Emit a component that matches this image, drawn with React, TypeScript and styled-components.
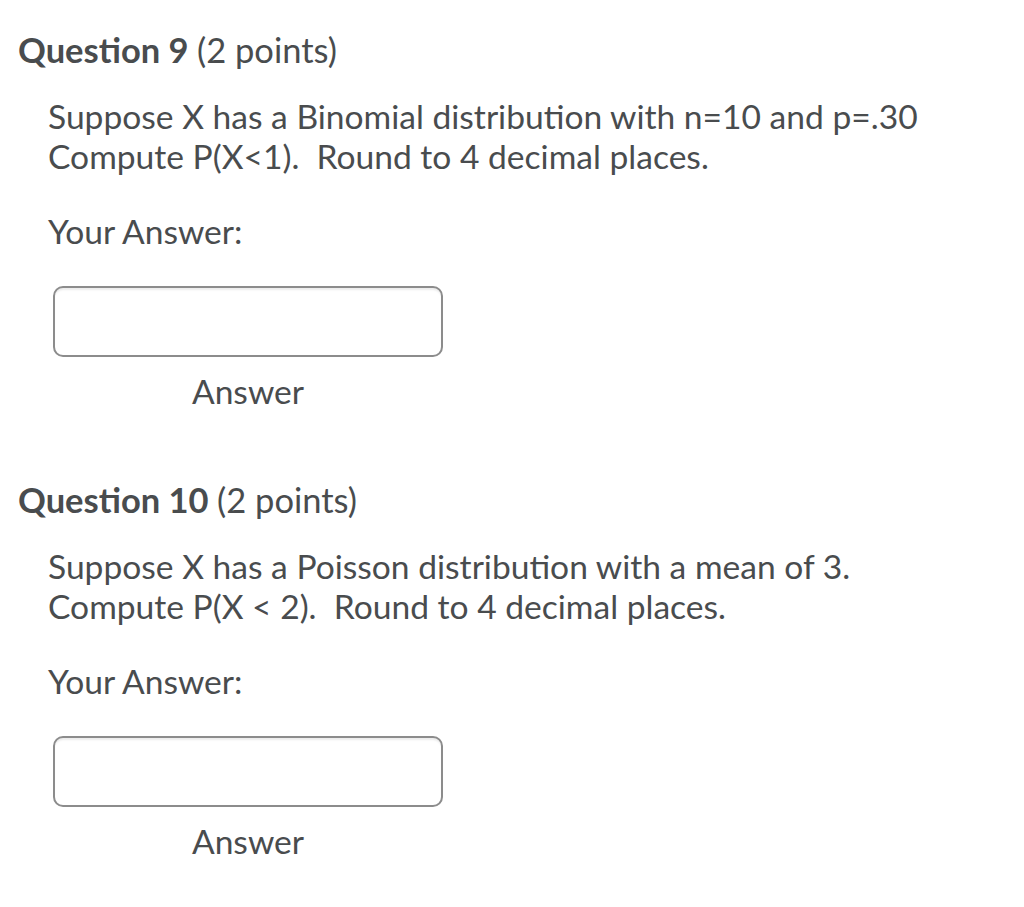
import * as React from 'react';
import styled, { createGlobalStyle } from 'styled-components';

const GlobalStyle = createGlobalStyle`
  html, body {
    margin: 0;
    padding: 0;
    background: #ffffff;
  }
  body {
    font-family: Lato, "Open Sans", sans-serif;
    color: #494c4e;
  }
`;

const Page = styled.main`
  padding: 30px 0 0 18px;
  display: flex;
  flex-direction: column;
`;

const QuestionBlock = styled.section`
  height: 450px;
  display: flex;
  flex-direction: column;
`;

const Heading = styled.h2`
  margin: 0;
  font-size: 34.5px;
  line-height: 40px;
  font-weight: 700;
  color: #494c4e;
`;

const Points = styled.span`
  font-weight: 400;
`;

const Body = styled.div`
  padding-left: 30px;
  display: flex;
  flex-direction: column;
  font-size: 33.6px;
  line-height: 40px;
`;

const Prompt = styled.p`
  margin: 26px 0 0;
  white-space: pre-wrap;
`;

const Label = styled.div`
  margin-top: 35px;
`;

const AnswerField = styled.div`
  margin-top: 35px;
  margin-left: 5px;
  width: 390px;
  display: flex;
  flex-direction: column;
  align-items: center;
`;

const Input = styled.input`
  box-sizing: border-box;
  width: 390px;
  height: 71px;
  border: 2px solid #8c8c8c;
  border-radius: 10px;
  box-shadow: inset 0 3px 2px -1px #ececec;
  background: #fff;
  outline: none;
`;

const Caption = styled.div`
  margin-top: 14px;
`;

type Question = {
  number: number;
  lines: string[];
};

const questions: Question[] = [
  {
    number: 9,
    lines: [
      'Suppose X has a Binomial distribution with n=10 and p=.30',
      'Compute P(X<1).  Round to 4 decimal places.'
    ]
  },
  {
    number: 10,
    lines: [
      'Suppose X has a Poisson distribution with a mean of 3.',
      'Compute P(X < 2).  Round to 4 decimal places.'
    ]
  }
];

const App: React.FC = () => (
  <>
    <GlobalStyle />
    <Page>
      {questions.map(q => (
        <QuestionBlock key={q.number}>
          <Heading>
            Question {q.number} <Points>(2 points)</Points>
          </Heading>
          <Body>
            <Prompt>{q.lines.join('\n')}</Prompt>
            <Label>Your Answer:</Label>
            <AnswerField>
              <Input type="text" aria-label="Answer" />
              <Caption>Answer</Caption>
            </AnswerField>
          </Body>
        </QuestionBlock>
      ))}
    </Page>
  </>
);

export default App;
